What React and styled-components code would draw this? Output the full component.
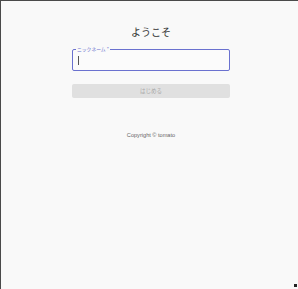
import styled, { createGlobalStyle } from 'styled-components';

const GlobalStyle = createGlobalStyle`
  html, body {
    margin: 0;
    padding: 0;
    height: 100%;
  }
  body {
    background: #f9f9f9;
    font-family: "Noto Sans CJK JP", "Liberation Sans", sans-serif;
    color: #333;
    box-sizing: border-box;
    border-top: 1px solid #4a4a4a;
    border-left: 1px solid #4a4a4a;
    position: relative;
  }
  #root {
    height: 100%;
  }
`;

const Page = styled.div`
  display: flex;
  flex-direction: column;
  align-items: center;
  padding: 21px 0 0 3px;
`;

const Card = styled.div`
  display: flex;
  flex-direction: column;
  width: 158px;
`;

const Title = styled.h1`
  margin: 0;
  text-align: center;
  font-size: 10px;
  line-height: 20px;
  font-weight: 400;
  color: #333;
`;

const FieldWrap = styled.div`
  position: relative;
  margin-top: 7px;
`;

const Field = styled.div`
  display: flex;
  align-items: center;
  height: 22px;
  box-sizing: border-box;
  border: 1.5px solid #6a71cf;
  border-radius: 2px;
  padding-left: 5px;
  background: #fbfbfb;
`;

const Caret = styled.span`
  display: block;
  width: 0.8px;
  height: 9px;
  background: #555;
`;

const Label = styled.span`
  position: absolute;
  left: 4px;
  top: -3px;
  padding: 0 1px;
  font-size: 4.8px;
  line-height: 5px;
  color: #6a71cf;
  background: #f9f9f9;
`;

const Button = styled.button`
  margin-top: 13px;
  height: 14px;
  border: none;
  border-radius: 2px;
  background: #e0e0e0;
  color: #a8a8a8;
  font-family: inherit;
  font-size: 5.5px;
  padding: 0;
  cursor: default;
`;

const Copyright = styled.p`
  margin: 34px 0 0;
  text-align: center;
  font-family: "Liberation Sans", sans-serif;
  font-size: 5.6px;
  color: #666;
`;

const Grip = styled.span`
  position: absolute;
  right: 1px;
  bottom: 2px;
  width: 3px;
  height: 3px;
  background: #222;
`;

export default function App() {
  return (
    <>
      <GlobalStyle />
      <Page>
        <Card>
          <Title>ようこそ</Title>
          <FieldWrap>
            <Label>ニックネーム *</Label>
            <Field>
              <Caret />
            </Field>
          </FieldWrap>
          <Button disabled>はじめる</Button>
          <Copyright>Copyright © tomato</Copyright>
        </Card>
      </Page>
      <Grip />
    </>
  );
}
